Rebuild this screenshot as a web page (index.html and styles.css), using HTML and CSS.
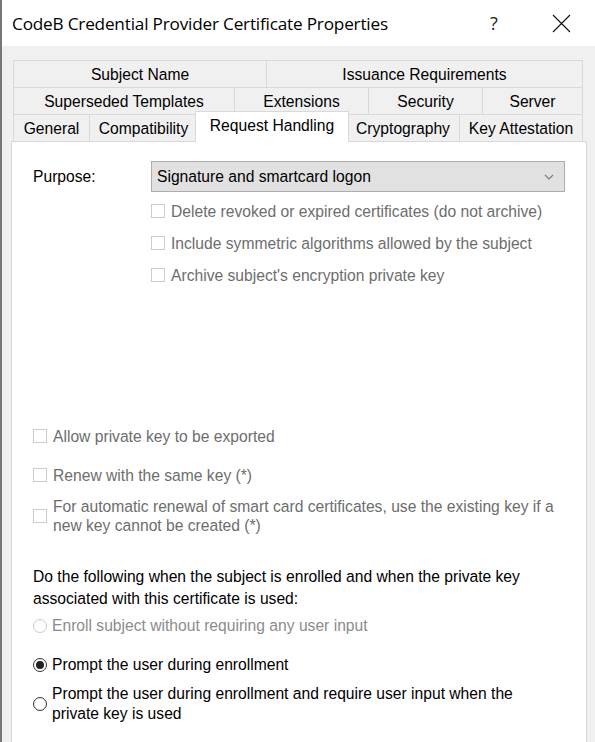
FILE: index.html
```html
<!DOCTYPE html>
<html>
<head>
<meta charset="utf-8">
<link rel="stylesheet" href="styles.css">
</head>
<body>
<div class="window">
  <div class="titlebar">
    <div class="title">CodeB Credential Provider Certificate Properties</div>
    <div class="tb-help">?</div>
    <div class="tb-close">
      <svg width="19" height="19" viewBox="0 0 19 19"><path d="M1 1 L18 18 M18 1 L1 18" stroke="#111" stroke-width="1.1" fill="none"/></svg>
    </div>
  </div>
  <div class="body">
    <div class="tabs">
      <div class="tabrow">
        <div class="tab w253">Subject Name</div>
        <div class="tab w317 last">Issuance Requirements</div>
      </div>
      <div class="tabrow">
        <div class="tab w221">Superseded Templates</div>
        <div class="tab w134">Extensions</div>
        <div class="tab w114">Security</div>
        <div class="tab w101 last">Server</div>
      </div>
      <div class="tabrow">
        <div class="tab w76">General</div>
        <div class="tab w108">Compatibility</div>
        <div class="tab w150 selected">Request Handling</div>
        <div class="tab w112">Cryptography</div>
        <div class="tab w124 last">Key Attestation</div>
      </div>
    </div>
    <div class="panel">
      <div class="purpose">
        <div class="purpose-label">Purpose:</div>
        <div class="combo">
          <span>Signature and smartcard logon</span>
          <svg class="chev" width="10" height="6" viewBox="0 0 10 6"><path d="M1 1 L5 5 L9 1" stroke="#7a7a7a" stroke-width="1.1" fill="none"/></svg>
        </div>
      </div>
      <div class="indent-group">
        <div class="check disabled"><span class="box"></span><span>Delete revoked or expired certificates (do not archive)</span></div>
        <div class="check disabled"><span class="box"></span><span>Include symmetric algorithms allowed by the subject</span></div>
        <div class="check disabled"><span class="box"></span><span>Archive subject's encryption private key</span></div>
      </div>
      <div class="key-group">
        <div class="check disabled"><span class="box"></span><span>Allow private key to be exported</span></div>
        <div class="check disabled gap2"><span class="box"></span><span>Renew with the same key (*)</span></div>
        <div class="check disabled multi"><span class="box"></span><span>For automatic renewal of smart card certificates, use the existing key if a<br>new key cannot be created (*)</span></div>
      </div>
      <p class="para">Do the following when the subject is enrolled and when the private key<br>associated with this certificate is used:</p>
      <div class="radio disabled r1"><span class="circle"></span><span>Enroll subject without requiring any user input</span></div>
      <div class="radio checked r2"><span class="circle"></span><span>Prompt the user during enrollment</span></div>
      <div class="radio multi r3"><span class="circle"></span><span>Prompt the user during enrollment and require user input when the<br>private key is used</span></div>
    </div>
  </div>
</div>
</body>
</html>
```

FILE: styles.css
```css
* { box-sizing: border-box; }
html, body { margin: 0; padding: 0; }
body {
  width: 595px;
  height: 742px;
  overflow: hidden;
  background: #f0f0f0;
  font-family: "Liberation Sans", Arial, sans-serif;
  font-size: 15.65px;
  color: #000;
}
.window {
  width: 595px;
  height: 742px;
  border-left: 2px solid #777777;
  display: flex;
  flex-direction: column;
}
.titlebar {
  height: 46px;
  background: #ffffff;
  display: flex;
  align-items: center;
  flex-shrink: 0;
}
.title {
  font-family: "Open Sans", "Noto Sans", sans-serif;
  font-size: 17.2px;
  padding-left: 10px;
  flex: 1;
  color: #000;
  letter-spacing: -0.2px;
}
.tb-help {
  font-family: "Open Sans", sans-serif;
  font-size: 18px;
  width: 20px;
  margin-right: 42px;
  color: #222;
}
.tb-close {
  width: 19px;
  height: 19px;
  margin-right: 24px;
  display: flex;
}
.body {
  flex: 1;
  display: flex;
  flex-direction: column;
  padding: 14px 8px 0 9px;
}
.tabs {
  display: flex;
  flex-direction: column;
  padding-left: 2px;
}
.tabrow {
  display: flex;
  height: 27px;
}
.tab {
  height: 27px;
  border-top: 1px solid #d9d9d9;
  border-left: 1px solid #d9d9d9;
  background: #f0f0f0;
  display: flex;
  align-items: center;
  justify-content: center;
  white-space: nowrap;
  padding-top: 1px;
}
.tab.last { border-right: 1px solid #d9d9d9; }
.tab.selected {
  background: #ffffff;
  border: 1px solid #d9d9d9;
  border-bottom: none;
  height: 31px;
  margin: -3px -2px 0 -2px;
  width: 154px;
  position: relative;
  z-index: 2;
  align-items: flex-start;
  padding-top: 5px;
}
.tab.selected + .tab { border-left: none; }
.w253 { width: 253px; }
.w317 { width: 317px; }
.w221 { width: 221px; }
.w134 { width: 134px; }
.w114 { width: 114px; }
.w101 { width: 101px; }
.w76 { width: 76px; }
.w108 { width: 108px; }
.w150 { width: 150px; }
.w112 { width: 112px; }
.w124 { width: 124px; }
.panel {
  flex: 1;
  background: #ffffff;
  border: 1px solid #d9d9d9;
  border-bottom: none;
  padding: 19px 0 0 21px;
  display: flex;
  flex-direction: column;
}
.purpose {
  display: flex;
  align-items: center;
}
.purpose-label { width: 118px; }
.combo {
  width: 414px;
  height: 31px;
  background: #e1e1e1;
  border: 1px solid #adadad;
  display: flex;
  align-items: center;
  justify-content: space-between;
  padding: 0 10px 0 5px;
}
.indent-group {
  margin-left: 118px;
  display: flex;
  flex-direction: column;
  gap: 14px;
  margin-top: 10px;
}
.check {
  display: flex;
  align-items: center;
  height: 18px;
  line-height: 19px;
}
.check .box {
  width: 14px;
  height: 14px;
  border: 1px solid #cccccc;
  background: #fff;
  margin-right: 6px;
  flex-shrink: 0;
}
.check.disabled { color: #6d6d6d; }
.check.multi { height: auto; }
.key-group {
  display: flex;
  flex-direction: column;
  margin-top: 143px;
}
.key-group .gap2 { margin-top: 21px; }
.key-group .multi { margin-top: 13px; }
.para {
  margin: 31px 0 0 0;
  line-height: 22px;
}
.radio {
  display: flex;
  align-items: center;
  line-height: 20px;
}
.radio .circle {
  width: 14px;
  height: 14px;
  border: 1px solid #333;
  border-radius: 50%;
  margin-right: 5px;
  flex-shrink: 0;
  display: flex;
  align-items: center;
  justify-content: center;
  background: #fff;
}
.radio.disabled { color: #8c8c8c; }
.radio.disabled .circle { border-color: #cccccc; }
.radio.checked .circle::after {
  content: "";
  width: 8px;
  height: 8px;
  border-radius: 50%;
  background: #222;
}
.r1 { margin-top: 6px; }
.r2 { margin-top: 19px; }
.r3 { margin-top: 9px; }
```
